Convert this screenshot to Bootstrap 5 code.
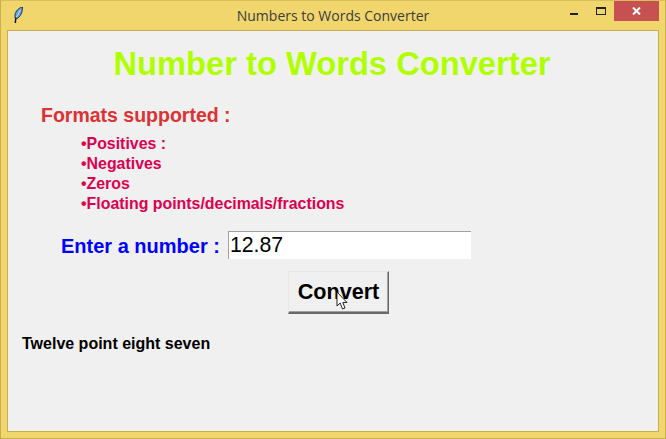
<!DOCTYPE html>
<html lang="en">
<head>
<meta charset="utf-8">
<title>Numbers to Words Converter</title>
<link href="https://cdn.jsdelivr.net/npm/bootstrap@5.3.0/dist/css/bootstrap.min.css" rel="stylesheet">
<style>
html,body{margin:0;height:439px;overflow:hidden;background:#f0d56b;}
body{font-family:"Liberation Sans",Arial,sans-serif;}
.win-frame{width:666px;height:439px;border:1px solid #c7ae4f;border-top-color:#d8bf5c;background:#f0d66c;}
.win-title{height:29px;position:relative;}
.title-text{font-family:"Open Sans",sans-serif;font-size:14px;color:#3c3c3c;line-height:30px;width:100%;text-align:center;}
.feather{position:absolute;left:13px;top:6px;}
.win-btns{position:absolute;right:6px;top:0;height:20px;}
.w-ctl{width:27px;height:20px;display:flex;align-items:center;justify-content:center;}
.w-min{padding-top:6px;}
.w-close{width:45px;background:#c75050;}
.win-body{margin:0 6px;height:402px;width:652px;background:#f0f0f0;border:1px solid #c7ae4f;padding-top:1px;}
.app-head{font-size:32.700px;font-weight:700;color:#b0ff00;line-height:38px;margin:13px 2px 0 0;text-align:center;}
.fmt-head{font-size:19.500px;font-weight:700;color:#dc3232;line-height:24px;margin:20px 0 0 33px;}
.fmt-list{margin:7px 0 0 73px;font-size:15.900px;font-weight:700;color:#dc0050;line-height:20px;}
.entry-row{margin:17px 0 0 53px;height:28px;}
.entry-lbl{font-size:20px;font-weight:700;color:#0000ff;line-height:30px;margin-right:8px;}
.entry-box{width:243px;height:28px;background:#fff;border:0;border-top:1px solid #a0a0a0;border-left:1px solid #a0a0a0;font-size:21.300px;color:#000;line-height:25px;padding:0 0 0 1px;font-family:"Liberation Sans",Arial,sans-serif;border-radius:0;outline:0;}
.btn-row{margin-top:12px;padding-left:280px;}
.conv-btn{position:relative;width:101px;height:43px;background:#f0f0f0;border:1px solid #e8e8e8;border-right-color:#696969;border-bottom:2px solid #696969;font-size:21.600px;font-weight:700;color:#000;border-radius:0;padding:0;line-height:38px;box-shadow:inset -1px -1px 0 #a0a0a0;}
.conv-btn:hover{background:#f0f0f0;color:#000;}
.cursor{position:absolute;left:47px;top:19px;}
.result-text{margin:20px 0 0 14px;font-size:16px;font-weight:700;color:#000;line-height:20px;}
</style>
</head>
<body>
<div class="win-frame">
  <div class="win-title d-flex">
    <svg class="feather" width="9" height="16" viewBox="0 0 9 16"><path d="M8.500 0C4.500 1 1.500 4 1 8L1 11 3 11.500C6 10 8.500 6 8.500 0Z" fill="#5b9ee6" stroke="#1c2a40" stroke-width=".9"/><path d="M6.500 3 2.500 10" stroke="#d5e6fa" stroke-width="1"/><path d="M1.800 11 1.300 16" stroke="#111" stroke-width="1.500"/></svg>
    <div class="title-text">Numbers to Words Converter</div>
    <div class="win-btns d-flex">
      <div class="w-ctl w-min"><svg width="8" height="2" viewBox="0 0 8 2"><rect width="8" height="2" fill="#222"/></svg></div>
      <div class="w-ctl"><svg width="10" height="8" viewBox="0 0 10 8"><rect x=".5" y=".5" width="9" height="7" fill="none" stroke="#222"/><rect width="10" height="2" fill="#222"/></svg></div>
      <div class="w-ctl w-close"><svg width="9" height="8" viewBox="0 0 9 8"><path d="M1 .5 8 7.500M8 .5 1 7.500" stroke="#fff" stroke-width="2"/></svg></div>
    </div>
  </div>
  <div class="win-body">
    <h1 class="app-head">Number to Words Converter</h1>
    <div class="fmt-head">Formats supported :</div>
    <div class="fmt-list">
      <div>•Positives :</div>
      <div>•Negatives</div>
      <div>•Zeros</div>
      <div>•Floating points/decimals/fractions</div>
    </div>
    <div class="entry-row d-flex">
      <span class="entry-lbl">Enter a number :</span>
      <input class="entry-box" type="text" value="12.87">
    </div>
    <div class="btn-row">
      <button class="btn conv-btn" type="button">Convert
        <svg class="cursor" width="13" height="20" viewBox="0 0 13 20"><path d="M1 1V15L4.200 12 6.500 18 9 17 6.800 11.500H11Z" fill="#fff" stroke="#222" stroke-width="1"/></svg>
      </button>
    </div>
    <div class="result-text">Twelve point eight seven</div>
  </div>
</div>
</body>
</html>
